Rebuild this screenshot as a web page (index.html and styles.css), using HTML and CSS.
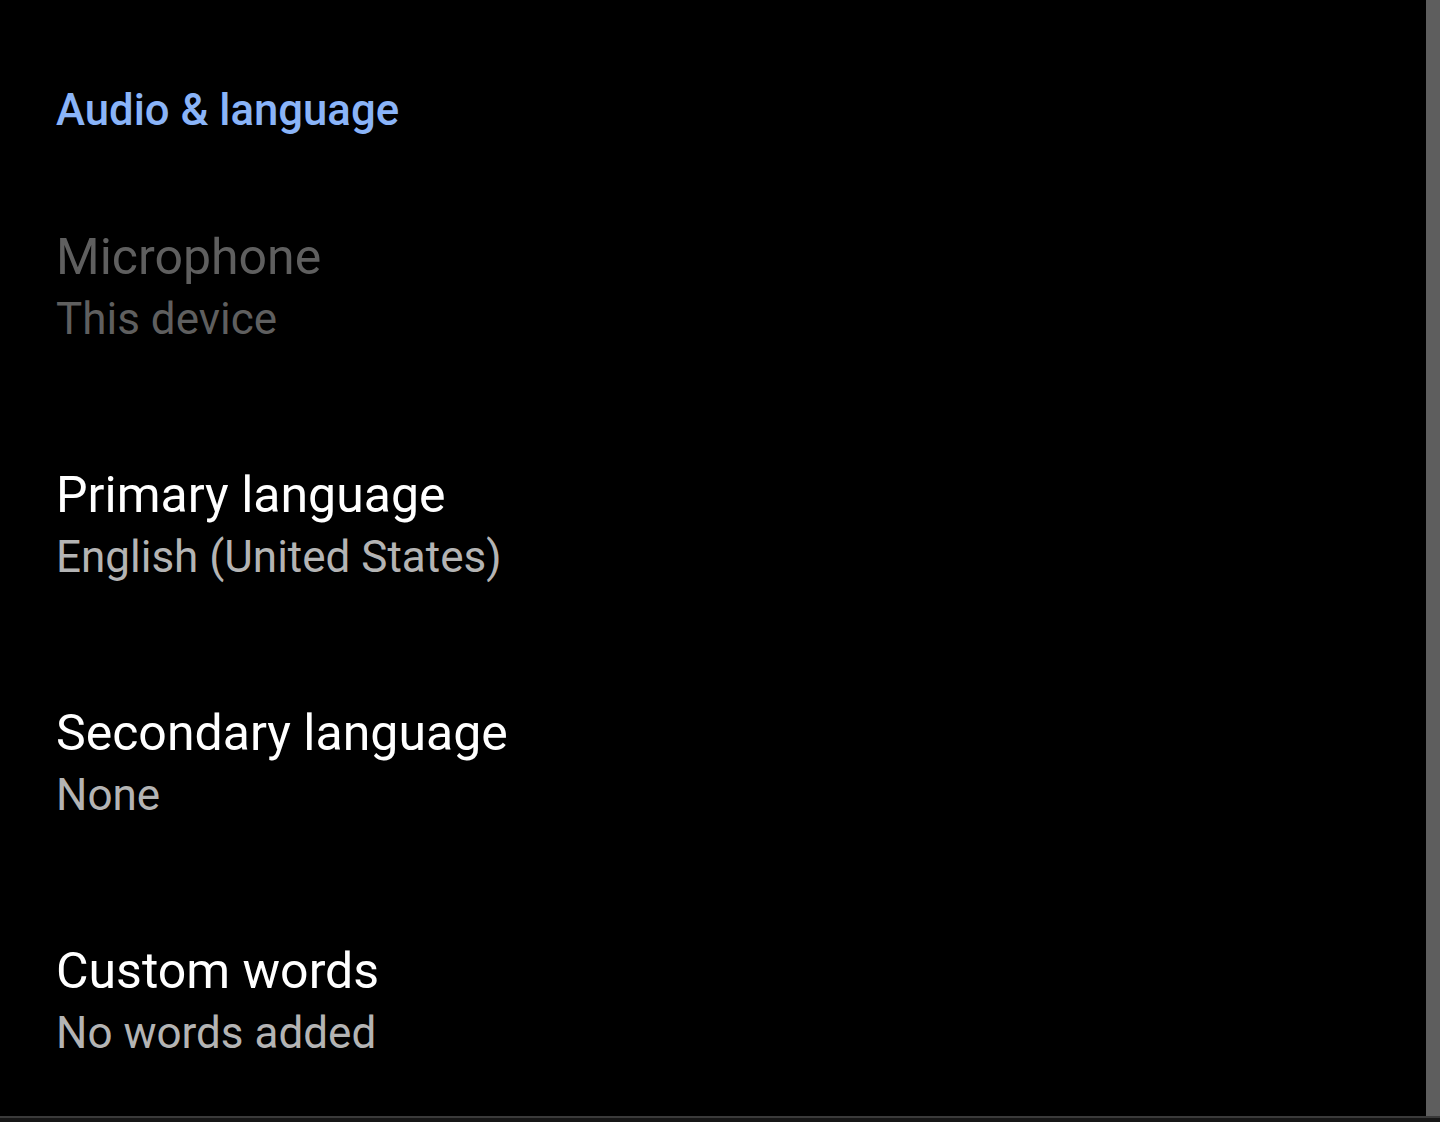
FILE: index.html
```html
<!DOCTYPE html>
<html lang="en">
<head>
    <meta charset="UTF-8">
    <title>Audio &amp; language</title>
    <link rel="stylesheet" href="styles.css">
</head>
<body>
    <div class="screen">
        <div class="panel">
            <h2 class="header">Audio &amp; language</h2>
            <div class="item disabled">
                <div class="title">Microphone</div>
                <div class="summary">This device</div>
            </div>
            <div class="item">
                <div class="title">Primary language</div>
                <div class="summary">English (United States)</div>
            </div>
            <div class="item">
                <div class="title">Secondary language</div>
                <div class="summary">None</div>
            </div>
            <div class="item">
                <div class="title">Custom words</div>
                <div class="summary">No words added</div>
            </div>
        </div>
        <div class="scrollbar"></div>
    </div>
    <div class="bottom"></div>
</body>
</html>
```

FILE: styles.css
```css
* {
    margin: 0;
    padding: 0;
}
html, body {
    height: 100%;
    background: #000;
    overflow: hidden;
}
body {
    display: flex;
    flex-direction: column;
    font-family: Roboto, "Noto Sans", sans-serif;
}
.screen {
    display: flex;
    height: 1116px;
    flex-shrink: 0;
}
.panel {
    flex: 1;
    display: flex;
    flex-direction: column;
    gap: 114px;
    padding: 80px 0 0 56px;
}
.scrollbar {
    width: 14px;
    background: #5e5e5e;
}
.bottom {
    flex: 1;
    border-top: 2px solid #3a3a3a;
    background: #161616;
}
.header {
    font-size: 43.7px;
    font-weight: 500;
    line-height: 60px;
    color: #8ab4f8;
    margin-bottom: -28px;
}
.item .title {
    font-size: 50px;
    line-height: 62px;
    color: #fff;
}
.item .summary {
    font-size: 44px;
    line-height: 62px;
    color: #b4b4b4;
}
.item.disabled .title,
.item.disabled .summary {
    color: #5f5f5f;
}
```
